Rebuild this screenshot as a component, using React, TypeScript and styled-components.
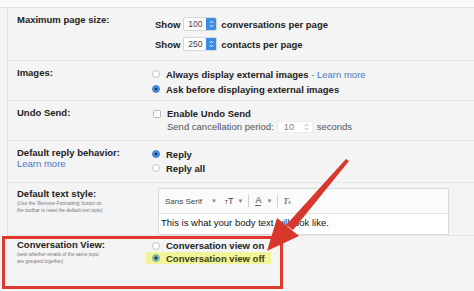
import React from "react";
import styled, { createGlobalStyle } from "styled-components";

const GlobalStyle = createGlobalStyle`
  html, body {
    margin: 0;
    padding: 0;
    background: #f4f4f4;
  }
  body {
    font-family: "Liberation Sans", Arial, sans-serif;
    color: #222;
  }
`;

const Page = styled.div`
  position: relative;
  width: 474px;
  height: 291px;
  overflow: hidden;
  background: #f4f4f4;
`;

const TopBand = styled.div`
  height: 7px;
  background: #f9f9f9;
  border-bottom: 1px solid #e3e3e3;
`;

const Sheet = styled.div`
  margin-left: 7px;
  border-left: 1px solid #e4e4e4;
`;

const Row = styled.div<{ $h: number; $pt: number }>`
  display: grid;
  grid-template-columns: 135px 1fr;
  box-sizing: border-box;
  height: ${(p) => p.$h}px;
  padding: ${(p) => p.$pt}px 0 0 9px;
  border-bottom: 1px solid #e6e6e6;
`;

const Label = styled.div`
  font-size: 9.5px;
  font-weight: bold;
  line-height: 11px;
  color: #222;
  white-space: nowrap;
`;

const Hint = styled.div`
  font-size: 4.8px;
  line-height: 6.5px;
  color: #777;
  margin-top: 2px;
  white-space: nowrap;
`;

const Link = styled.a`
  color: #4a77c4;
  font-weight: normal;
  text-decoration: none;
`;

const Value = styled.div<{ $top?: number; $gap?: number }>`
  display: flex;
  flex-direction: column;
  gap: ${(p) => p.$gap ?? 0}px;
  margin-top: ${(p) => p.$top ?? 0}px;
`;

const Line = styled.div<{ $h?: number }>`
  display: flex;
  align-items: center;
  height: ${(p) => p.$h ?? 14}px;
  font-size: 9.5px;
  font-weight: bold;
  color: #222;
  white-space: nowrap;
`;

const Radio = styled.span<{ $on?: boolean; $tint?: string }>`
  flex: none;
  box-sizing: border-box;
  width: 8px;
  height: 8px;
  margin-right: 6px;
  border-radius: 50%;
  border: 1px solid ${(p) => (p.$on ? p.$tint ?? "#2f76cc" : "#c4c4c4")};
  background: ${(p) =>
    p.$on
      ? `radial-gradient(circle, #1c3c66 0 1.3px, ${p.$tint ?? "#4d9af0"} 1.8px)`
      : "#fff"};
`;

const Checkbox = styled.span`
  flex: none;
  box-sizing: border-box;
  width: 8px;
  height: 8px;
  margin: 0 6px 0 1px;
  border-radius: 1.5px;
  border: 1px solid #b5b5b5;
  background: #fff;
`;

const Word = styled.span`
  margin-left: 3px;
  margin-right: 3px;
`;

const Select = styled.span`
  display: inline-flex;
  height: 12px;
  margin-right: 4px;
  border: 1px solid #d6d6d6;
  border-radius: 2px;
  background: #fff;
  overflow: hidden;
`;

const SelectText = styled.span`
  width: 22px;
  padding-left: 4px;
  box-sizing: border-box;
  overflow: hidden;
  font-size: 8.5px;
  font-weight: normal;
  line-height: 12px;
  color: #444;
`;

const Stepper = styled.span<{ $blue?: boolean }>`
  display: flex;
  align-items: center;
  justify-content: center;
  width: 10px;
  background: ${(p) => (p.$blue ? "#3d8ce4" : "transparent")};
`;

const Muted = styled.span<{ $ml?: number }>`
  margin-left: ${(p) => p.$ml ?? 0}px;
  font-weight: normal;
  color: #555;
`;

const NumberBox = styled.span`
  display: inline-flex;
  align-items: center;
  justify-content: space-between;
  box-sizing: border-box;
  width: 36px;
  height: 12px;
  margin: 0 4px 0 3px;
  padding-left: 6px;
  border: 1px solid #ececec;
  background: #fff;
  font-weight: normal;
  color: #888;
`;

const Editor = styled.div`
  width: 291px;
  margin-left: 6px;
  box-sizing: border-box;
  border: 1px solid #d9d9d9;
  background: #fff;
`;

const Toolbar = styled.div`
  display: flex;
  align-items: center;
  height: 24px;
  padding-left: 6px;
  border-bottom: 1px solid #e2e2e2;
  background: #fbfbfb;
  font-size: 8px;
  color: #444;
`;

const Tool = styled.span<{ $ml?: number }>`
  display: inline-flex;
  align-items: baseline;
  margin-left: ${(p) => p.$ml ?? 0}px;
`;

const Caret = styled.span<{ $ml?: number }>`
  margin-left: ${(p) => p.$ml ?? 0}px;
  font-size: 6px;
  color: #888;
`;

const Sep = styled.span<{ $ml?: number }>`
  width: 1px;
  height: 12px;
  margin-left: ${(p) => p.$ml ?? 0}px;
  background: #d2d2d2;
`;

const Small = styled.span`
  font-size: 5px;
`;

const Big = styled.span<{ $serif?: boolean }>`
  font-size: 9px;
  font-style: ${(p) => (p.$serif ? "italic" : "normal")};
  font-family: ${(p) => (p.$serif ? '"Liberation Serif", serif' : "inherit")};
`;

const ColorA = styled.span`
  font-size: 9px;
  line-height: 9px;
  border-bottom: 1px solid #666;
`;

const Sample = styled.div`
  height: 18px;
  padding-left: 2px;
  font-size: 9.5px;
  line-height: 18px;
  color: #111;
`;

const Callout = styled.div`
  box-sizing: border-box;
  width: 281px;
  height: 53px;
  margin-left: 2px;
  padding: 0 0 0 12px;
  border: 3px solid #e0392d;
  display: grid;
  grid-template-columns: 135px 1fr;
`;

const Marked = styled.div`
  display: flex;
  align-items: center;
  height: 12px;
  margin-left: -6px;
  padding: 0 6px;
  width: fit-content;
  background: #f1f59a;
  font-size: 9.5px;
  font-weight: bold;
  color: #3d3d12;
  white-space: nowrap;
`;

const Arrow = styled.svg`
  position: absolute;
  left: 0;
  top: 0;
  pointer-events: none;
`;

const Updown = ({ color }: { color: string }) => (
  <svg width="5" height="8" viewBox="0 0 5 8">
    <path d="M0.8 3 L2.5 1.2 L4.2 3 M0.8 5 L2.5 6.8 L4.2 5" fill="none" stroke={color} strokeWidth="0.9" />
  </svg>
);

export default function App() {
  return (
    <Page>
      <GlobalStyle />
      <TopBand />
      <Sheet>
        <Row $h={53} $pt={6}>
          <Label>Maximum page size:</Label>
          <Value $top={3} $gap={6}>
            <Line>
              <Word>Show</Word>
              <Select>
                <SelectText>100</SelectText>
                <Stepper $blue>
                  <Updown color="#fff" />
                </Stepper>
              </Select>
              conversations per page
            </Line>
            <Line>
              <Word>Show</Word>
              <Select>
                <SelectText>250</SelectText>
                <Stepper $blue>
                  <Updown color="#fff" />
                </Stepper>
              </Select>
              contacts per page
            </Line>
          </Value>
        </Row>
        <Row $h={40} $pt={6}>
          <Label>Images:</Label>
          <Value $gap={1}>
            <Line>
              <Radio />
              Always display external images&nbsp;
              <Link>- Learn more</Link>
            </Line>
            <Line>
              <Radio $on />
              Ask before displaying external images
            </Line>
          </Value>
        </Row>
        <Row $h={40} $pt={6}>
          <Label>Undo Send:</Label>
          <Value>
            <Line $h={13}>
              <Checkbox />
              Enable Undo Send
            </Line>
            <Line $h={13}>
              <Muted $ml={15}>Send cancellation period:</Muted>
              <NumberBox>
                10
                <Stepper>
                  <Updown color="#aaa" />
                </Stepper>
              </NumberBox>
              <Muted>seconds</Muted>
            </Line>
          </Value>
        </Row>
        <Row $h={42} $pt={6}>
          <Label>
            Default reply behavior:
            <br />
            <Link>Learn more</Link>
          </Label>
          <Value>
            <Line>
              <Radio $on />
              Reply
            </Line>
            <Line>
              <Radio />
              Reply all
            </Line>
          </Value>
        </Row>
        <Row $h={53} $pt={5}>
          <div>
            <Label>Default text style:</Label>
            <Hint>
              (Use the 'Remove Formatting' button on
              <br />
              the toolbar to reset the default text style)
            </Hint>
          </div>
          <Editor>
            <Toolbar>
              <Tool>Sans Serif</Tool>
              <Caret $ml={9}>▼</Caret>
              <Tool $ml={8}>
                <Small>T</Small>
                <Big>T</Big>
              </Tool>
              <Caret $ml={4}>▼</Caret>
              <Sep $ml={5} />
              <Tool $ml={6}>
                <ColorA>A</ColorA>
              </Tool>
              <Caret $ml={5}>▼</Caret>
              <Sep $ml={5} />
              <Tool $ml={5}>
                <Big $serif>T</Big>
                <Small>x</Small>
              </Tool>
            </Toolbar>
            <Sample>This is what your body text will look like.</Sample>
          </Editor>
        </Row>
      </Sheet>
      <Callout>
        <div>
          <Label>Conversation View:</Label>
          <Hint>
            (sets whether emails of the same topic
            <br />
            are grouped together)
          </Hint>
        </div>
        <Value>
          <Line $h={13}>
            <Radio />
            Conversation view on
          </Line>
          <Marked>
            <Radio $on $tint="#7fb59a" />
            Conversation view off
          </Marked>
        </Value>
      </Callout>
      <Arrow width="474" height="291" viewBox="0 0 474 291">
        <polygon points="346,159 349,161 293,230 286,225" fill="#d8382c" />
        <polygon points="267,251 277,218 299,236" fill="#d8382c" />
      </Arrow>
    </Page>
  );
}
